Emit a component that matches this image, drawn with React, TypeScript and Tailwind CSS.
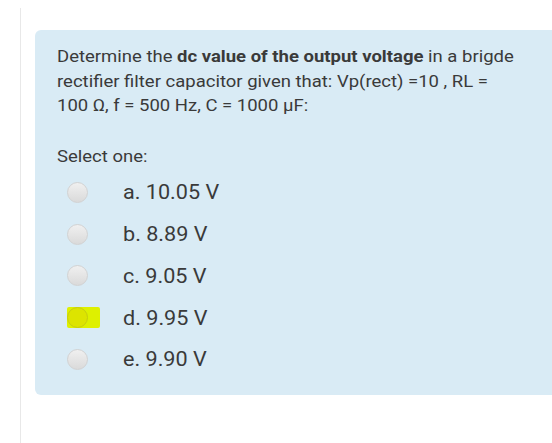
import React from 'react';

const options = [
  { key: 'a', label: '10.05 V' },
  { key: 'b', label: '8.89 V' },
  { key: 'c', label: '9.05 V' },
  { key: 'd', label: '9.95 V', marked: true },
  { key: 'e', label: '9.90 V' },
];

function Radio({ marked }: { marked?: boolean }) {
  return (
    <div className="relative w-[21px] h-[21px] shrink-0">
      {marked && <div className="absolute left-0 top-0 w-[33px] h-[21px] bg-[#def000] rounded-[2px]" />}
      <div
        className={`absolute inset-0 rounded-full border ${
          marked ? 'bg-[#dde400] border-[#c6cc10]' : 'border-[#d2d2d2] bg-gradient-to-b from-[#f0f0f0] to-[#dadada]'
        }`}
      />
    </div>
  );
}

export default function App() {
  return (
    <div className="w-[552px] h-[443px] bg-white overflow-hidden pt-2 pl-5" style={{ fontFamily: 'Roboto, "Liberation Sans", sans-serif' }}>
      <div className="h-full border-l border-[#e8e8e8] pt-[22px] pl-[14px]">
        <div className="bg-[#d9ebf5] rounded-l-md pt-[14px] pb-[15px] pl-[22px]">
          <p className="w-[425px] origin-left scale-x-[1.088] text-[17px] leading-[24.5px] text-[#3a3a3a]">
            Determine the <b className="font-bold">dc value of the output voltage</b> in a brigde rectifier filter capacitor given that: Vp(rect) =10 , RL = 100 Ω, f = 500 Hz, C = 1000 μF:
          </p>
          <p className="mt-[26px] origin-left scale-x-[1.088] text-[17px] leading-[24px] text-[#3a3a3a]">Select one:</p>
          <div className="mt-[4px] flex flex-col">
            {options.map((o) => (
              <div key={o.key} className="flex items-center h-[41.75px] pl-[10px]">
                <Radio marked={o.marked} />
                <span className="ml-[35px] inline-block origin-left scale-x-[1.08] text-[20px] text-[#3a3a3a]">
                  {o.key}. {o.label}
                </span>
              </div>
            ))}
          </div>
        </div>
      </div>
    </div>
  );
}
